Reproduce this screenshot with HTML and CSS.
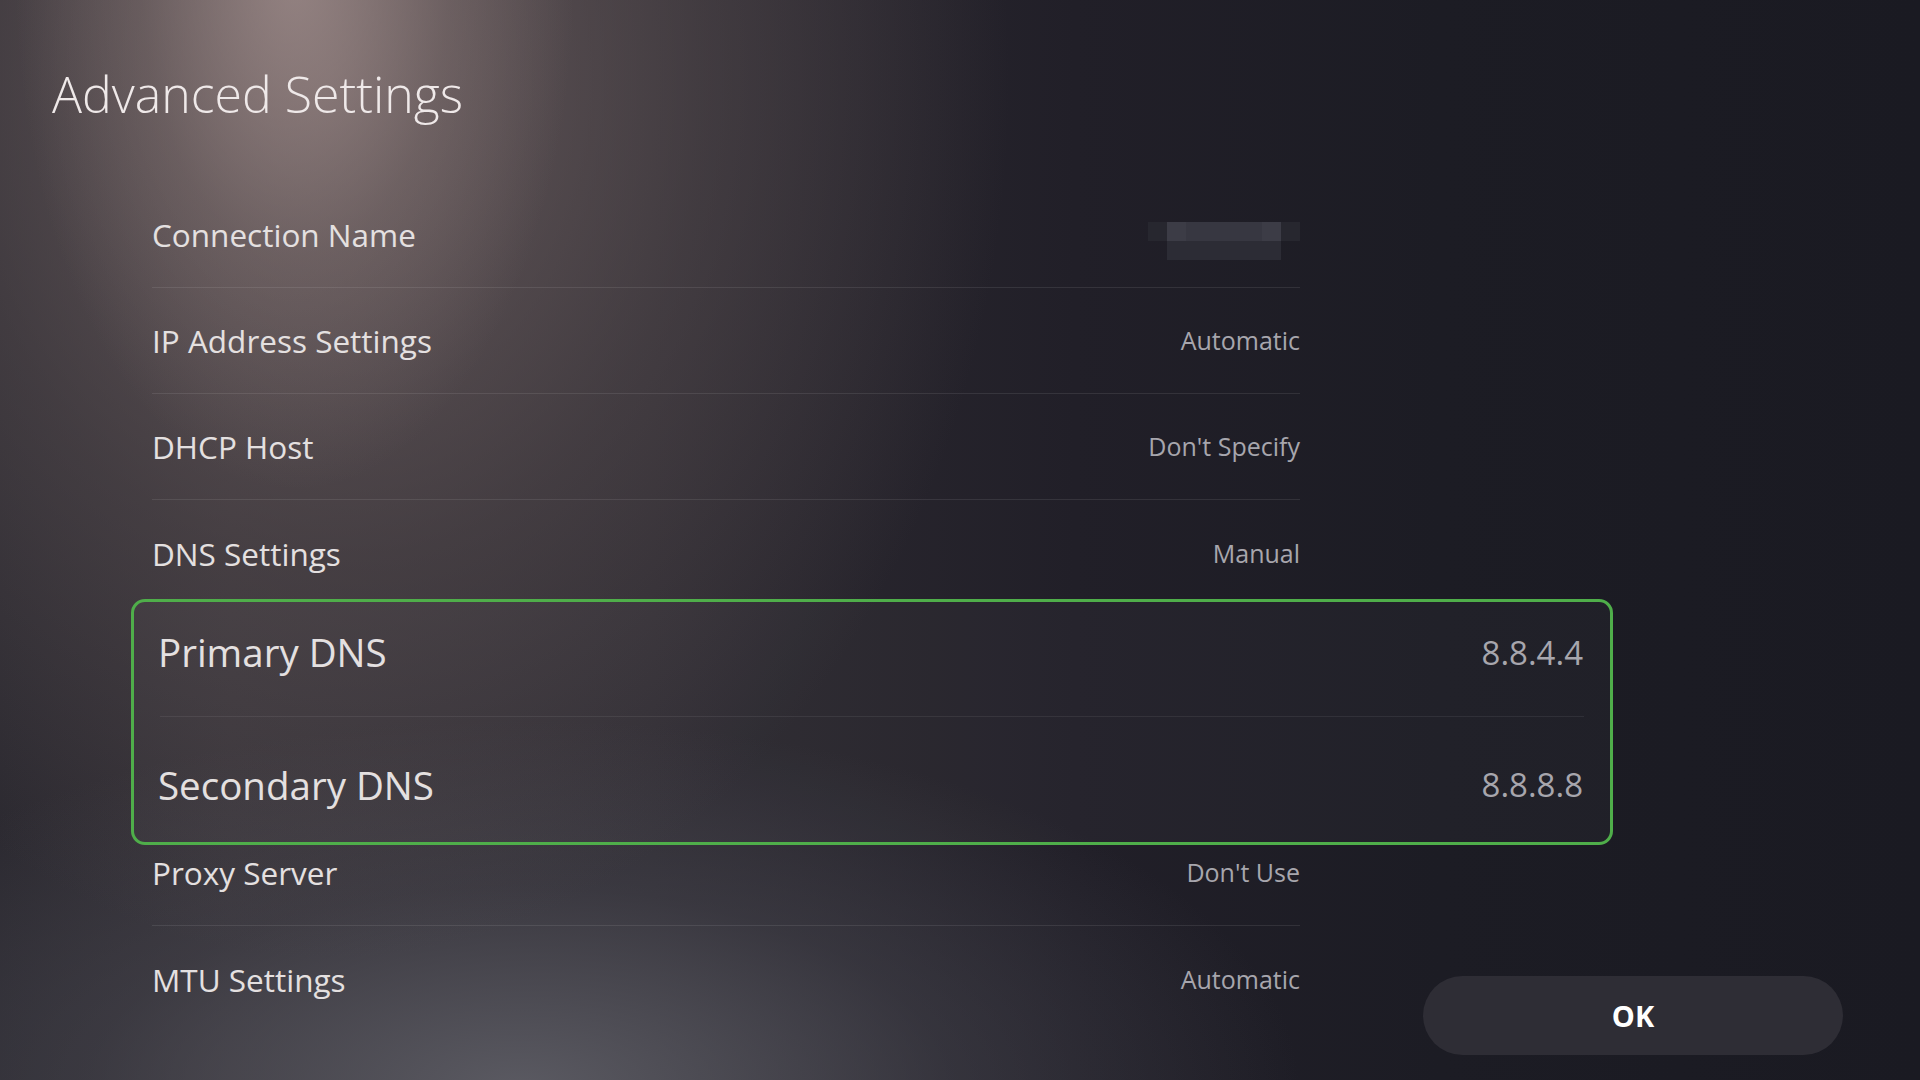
FILE: index.html
```html
<!DOCTYPE html>
<html lang="en">
<head>
    <meta charset="UTF-8">
    <meta name="viewport" content="width=device-width, initial-scale=1.0">
    <title>Advanced Settings</title>
    <link rel="stylesheet" href="styles.css">
</head>
<body>
    <div class="screen">
        <h1 class="title">Advanced Settings</h1>

        <div class="content">
            <div class="list">
                <div class="row">
                    <span class="label">Connection Name</span>
                    <!-- name is pixelated in the capture -->
                    <div class="blurred">
                        <i class="b1"></i><i class="b3"></i><i class="b2"></i><i class="b2"></i><i class="b2"></i><i class="b2"></i><i class="b3"></i><i class="b1"></i>
                        <i></i><i class="b4"></i><i class="b4"></i><i class="b4"></i><i class="b4"></i><i class="b4"></i><i class="b4"></i><i></i>
                    </div>
                </div>
                <div class="row">
                    <span class="label">IP Address Settings</span>
                    <span class="value">Automatic</span>
                </div>
                <div class="row">
                    <span class="label">DHCP Host</span>
                    <span class="value">Don't Specify</span>
                </div>
                <div class="row no-line">
                    <span class="label">DNS Settings</span>
                    <span class="value">Manual</span>
                </div>

                <div class="highlight">
                    <div class="row big first">
                        <span class="label">Primary DNS</span>
                        <span class="value">8.8.4.4</span>
                    </div>
                    <div class="row big last">
                        <span class="label">Secondary DNS</span>
                        <span class="value">8.8.8.8</span>
                    </div>
                </div>

                <div class="row">
                    <span class="label">Proxy Server</span>
                    <span class="value">Don't Use</span>
                </div>
                <div class="row no-line">
                    <span class="label">MTU Settings</span>
                    <span class="value">Automatic</span>
                </div>
            </div>

            <div class="actions">
                <button class="ok">OK</button>
            </div>
        </div>
    </div>
</body>
</html>
```

FILE: styles.css
```css
body {
    margin: 0;
    padding: 0;
    font-family: "Open Sans", "Noto Sans", sans-serif;
    color: #e6e2e2;
    background-color: #1b1b23;
    overflow: hidden;
}

/* PS5 style backdrop: spotlight top left, dark navy right */
.screen {
    width: 1920px;
    height: 1080px;
    display: flex;
    flex-direction: column;
    background:
        radial-gradient(ellipse 280px 520px at 295px -30px, rgba(170, 150, 148, 0.7), rgba(150, 132, 130, 0.3) 55%, transparent 100%),
        radial-gradient(ellipse 680px 880px at 330px 80px, rgba(120, 105, 105, 0.75), rgba(96, 85, 87, 0.42) 55%, transparent 100%),
        radial-gradient(ellipse 780px 370px at 520px 1090px, rgba(98, 98, 106, 0.85), rgba(76, 76, 85, 0.42) 55%, transparent 100%),
        linear-gradient(90deg, #2b2930 0%, #332f35 12%, #2d2a31 34%, #211f28 56%, #1c1c24 75%, #1a1a22 100%);
}

.title {
    margin: 70px 0 0 52px;
    font-size: 50px;
    font-weight: 300;
    line-height: 49px;
    color: #efe9e9;
}

.content {
    flex: 1;
    display: flex;
}

/* Settings list */
.list {
    width: 1148px;
    margin: 63px 0 0 152px;
    display: flex;
    flex-direction: column;
}

.row {
    height: 106px;
    box-sizing: border-box;
    display: flex;
    align-items: center;
    justify-content: space-between;
    border-bottom: 1px solid rgba(255, 255, 255, 0.09);
}

.row.no-line {
    border-bottom: none;
}

.label {
    font-size: 31.5px;
    line-height: 31px;
    color: #e4e0e0;
}

.value {
    font-size: 25px;
    line-height: 25px;
    color: #a7a6ad;
}

.blurred {
    display: grid;
    grid-template-columns: repeat(8, 19px);
    grid-auto-rows: 19px;
    margin-top: 12px;
}

.blurred i { display: block; }
.blurred .b1 { background-color: #27272f; }
.blurred .b2 { background-color: #373741; }
.blurred .b3 { background-color: #3c3c46; }
.blurred .b4 { background-color: #2c2c35; }

/* Highlighted DNS block */
.highlight {
    margin: -7px 0 -25px -21px;
    width: 1482px;
    height: 246px;
    box-sizing: border-box;
    border: 3px solid #4fae4a;
    border-radius: 14px;
    background-color: rgba(255, 255, 255, 0.025);
    padding: 0 26px 0 26px;
    display: flex;
    flex-direction: column;
}

.row.big .label {
    font-size: 38.5px;
    line-height: 38px;
    margin-left: -2px;
}

.row.big .value {
    font-size: 33px;
    line-height: 33px;
    margin-right: 1px;
}

.row.big.first {
    height: 115px;
    padding-bottom: 14px;
    border-bottom-color: rgba(255, 255, 255, 0.07);
}

.row.big.last {
    flex: 1;
    height: auto;
    padding-top: 10px;
    border-bottom: none;
}

/* OK button */
.actions {
    flex: 1;
    display: flex;
    align-items: flex-end;
    padding: 0 0 25px 123px;
}

.ok {
    width: 420px;
    height: 79px;
    border: none;
    border-radius: 40px;
    background-color: #2e2d35;
    color: #ffffff;
    font-family: "Open Sans", sans-serif;
    font-size: 29px;
    font-weight: 700;
    cursor: pointer;
}
```
